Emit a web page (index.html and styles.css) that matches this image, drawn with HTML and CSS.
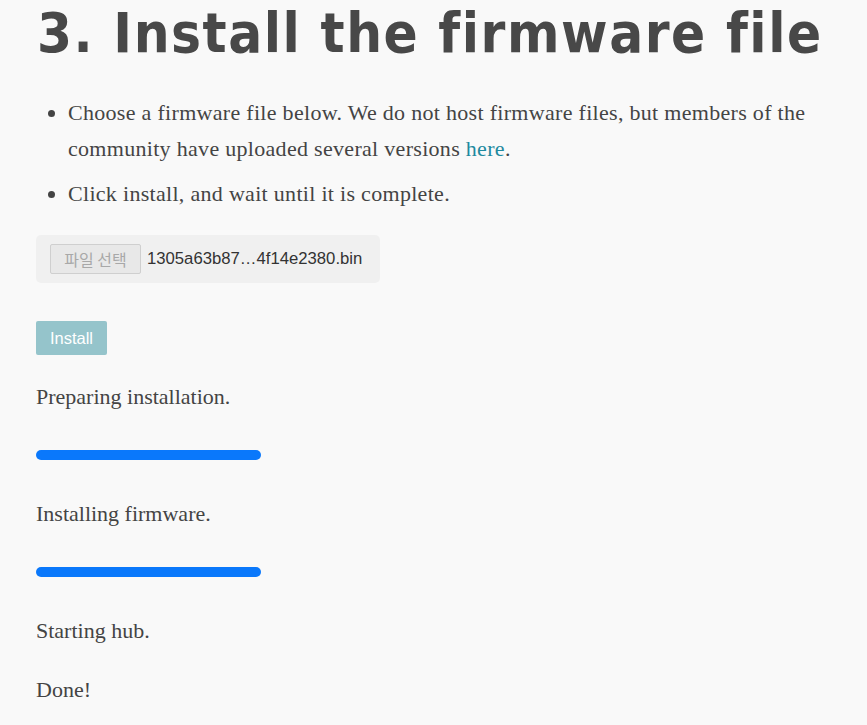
FILE: index.html
```html
<!DOCTYPE html>
<html lang="en">
<head>
<meta charset="utf-8">
<title>Install the firmware file</title>
<link rel="stylesheet" href="styles.css">
</head>
<body>
<main class="page">
  <h1 class="title">3. Install the firmware file</h1>
  <ul class="steps">
    <li>Choose a firmware file below. We do not host firmware files, but members of the community have uploaded several versions <a href="#" class="link">here</a>.</li>
    <li>Click install, and wait until it is complete.</li>
  </ul>
  <div class="file-box">
    <span class="file-btn">파일 선택</span>
    <span class="file-name">1305a63b87…4f14e2380.bin</span>
  </div>
  <button class="install-btn" disabled>Install</button>
  <p class="status status-first">Preparing installation.</p>
  <div class="bar"></div>
  <p class="status">Installing firmware.</p>
  <div class="bar"></div>
  <p class="status">Starting hub.</p>
  <p class="status">Done!</p>
</main>
</body>
</html>
```

FILE: styles.css
```css
html, body {
  margin: 0;
  padding: 0;
  background: #f9f9f9;
}
body {
  color: #444;
  font-family: "Liberation Serif", "DejaVu Serif", serif;
  font-size: 22px;
  font-variant-ligatures: none;
}
.page {
  padding: 0 36px;
  display: flex;
  flex-direction: column;
  align-items: flex-start;
}
.title {
  font-family: "DejaVu Sans Condensed", "DejaVu Sans", sans-serif;
  font-stretch: condensed;
  font-weight: bold;
  font-size: 56px;
  line-height: 66px;
  letter-spacing: 1.55px;
  margin: 0;
  color: #484848;
  margin-left: 1px;
  white-space: nowrap;
}
.steps {
  margin: 29px 0 0 0;
  padding-left: 32px;
  line-height: 36px;
  letter-spacing: 0.3px;
}
.steps li {
  margin-bottom: 9px;
}
.link {
  color: #1f8a9f;
  text-decoration: none;
}
.file-box {
  margin-top: 14px;
  width: 344px;
  height: 48px;
  box-sizing: border-box;
  background: #f0f0f0;
  border-radius: 5px;
  display: flex;
  align-items: center;
  padding-left: 14px;
  gap: 6px;
  font-family: "Liberation Sans", Arial, sans-serif;
  font-size: 16.7px;
  letter-spacing: 0;
}
.file-btn {
  font-family: "Noto Sans CJK KR", "Liberation Sans", sans-serif;
  color: #a8a8a8;
  background: #e8e8e8;
  border: 1px solid #cfcfcf;
  border-radius: 2px;
  height: 30px;
  width: 91px;
  box-sizing: border-box;
  display: flex;
  align-items: center;
  justify-content: center;
  font-size: 16px;
}
.file-name {
  color: #333;
}
.install-btn {
  margin-top: 38px;
  background: #95c4cb;
  color: #fff;
  border: none;
  border-radius: 2px;
  font-family: "Liberation Sans", Arial, sans-serif;
  font-size: 16.5px;
  width: 71px;
  height: 34px;
  padding: 0;
}
.status {
  margin: 35px 0 0 0;
  line-height: 24px;
}
.status-first {
  margin-top: 30px;
}
.bar {
  margin: 41px 0 7px 0;
  width: 225px;
  height: 10px;
  border-radius: 5px;
  background: #0a78fb;
}
```
